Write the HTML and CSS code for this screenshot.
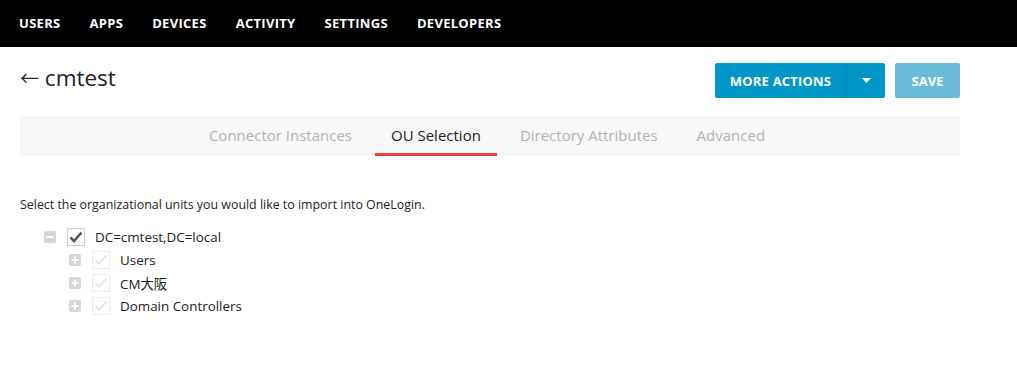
FILE: index.html
```html
<!DOCTYPE html>
<html>
<head>
<meta charset="utf-8">
<link rel="stylesheet" href="styles.css">
</head>
<body>
<nav class="topnav">
  <a>USERS</a><a>APPS</a><a>DEVICES</a><a>ACTIVITY</a><a>SETTINGS</a><a>DEVELOPERS</a>
</nav>
<main class="page">
  <div class="header">
    <h1 class="title"><span class="arrow">&larr;</span> cmtest</h1>
    <div class="actions">
      <div class="btn-split">
        <span class="btn-label">MORE ACTIONS</span>
        <span class="btn-caret"><svg width="9" height="5" viewBox="0 0 9 5"><path d="M0 0h9L4.5 5z" fill="#fff"/></svg></span>
      </div>
      <div class="btn-save">SAVE</div>
    </div>
  </div>
  <div class="tabs">
    <span class="tab">Connector Instances</span>
    <span class="tab active">OU Selection</span>
    <span class="tab">Directory Attributes</span>
    <span class="tab">Advanced</span>
  </div>
  <p class="intro">Select the organizational units you would like to import into OneLogin.</p>
  <ul class="tree">
    <li class="node">
      <div class="row">
        <span class="toggle"><svg width="12" height="12" viewBox="0 0 12 12"><rect width="12" height="12" rx="2" fill="#d6d6d6"/><rect x="2.5" y="5" width="7" height="2" fill="#fff"/></svg></span>
        <span class="cb on"><svg width="14" height="12" viewBox="0 0 14 12"><path d="M1.5 6.5l3.5 3.5 7.5-8.5" fill="none" stroke="#555" stroke-width="2.6"/></svg></span>
        <span class="label">DC=cmtest,DC=local</span>
      </div>
      <ul class="children">
        <li class="row">
          <span class="toggle"><svg width="12" height="12" viewBox="0 0 12 12"><rect width="12" height="12" rx="2" fill="#d6d6d6"/><rect x="2.5" y="5" width="7" height="2" fill="#fff"/><rect x="5" y="2.5" width="2" height="7" fill="#fff"/></svg></span>
          <span class="cb off"><svg width="14" height="12" viewBox="0 0 14 12"><path d="M1.5 6.5l3.5 3.5 7.5-8.5" fill="none" stroke="#e6e6e6" stroke-width="2"/></svg></span>
          <span class="label">Users</span>
        </li>
        <li class="row">
          <span class="toggle"><svg width="12" height="12" viewBox="0 0 12 12"><rect width="12" height="12" rx="2" fill="#d6d6d6"/><rect x="2.5" y="5" width="7" height="2" fill="#fff"/><rect x="5" y="2.5" width="2" height="7" fill="#fff"/></svg></span>
          <span class="cb off"><svg width="14" height="12" viewBox="0 0 14 12"><path d="M1.5 6.5l3.5 3.5 7.5-8.5" fill="none" stroke="#e6e6e6" stroke-width="2"/></svg></span>
          <span class="label">CM大阪</span>
        </li>
        <li class="row">
          <span class="toggle"><svg width="12" height="12" viewBox="0 0 12 12"><rect width="12" height="12" rx="2" fill="#d6d6d6"/><rect x="2.5" y="5" width="7" height="2" fill="#fff"/><rect x="5" y="2.5" width="2" height="7" fill="#fff"/></svg></span>
          <span class="cb off"><svg width="14" height="12" viewBox="0 0 14 12"><path d="M1.5 6.5l3.5 3.5 7.5-8.5" fill="none" stroke="#e6e6e6" stroke-width="2"/></svg></span>
          <span class="label">Domain Controllers</span>
        </li>
      </ul>
    </li>
  </ul>
</main>
</body>
</html>
```

FILE: styles.css
```css
* { box-sizing: border-box; }
body {
  margin: 0;
  font-family: "Open Sans", "Noto Sans CJK JP", sans-serif;
  color: #333;
  background: #fff;
}
.topnav {
  background: #000;
  height: 47px;
  display: flex;
  align-items: center;
  gap: 29px;
  padding: 0 19px 1px;
}
.topnav a {
  color: #fff;
  font-weight: 700;
  font-size: 13px;
  letter-spacing: 0.3px;
}
.page {
  padding: 0 57px 0 20px;
}
.header {
  display: flex;
  justify-content: space-between;
  align-items: flex-start;
  padding-top: 16px;
  height: 69px;
}
.title {
  margin: 0;
  font-size: 22.5px;
  font-weight: 400;
  color: #222;
  line-height: 30px;
}
.arrow { font-size: 19px; }
.actions {
  display: flex;
  gap: 10px;
}
.btn-split {
  display: flex;
  height: 35px;
  background: #0096c6;
  border-radius: 2px;
  color: #fff;
  font-weight: 700;
  font-size: 13px;
  letter-spacing: 0.2px;
}
.btn-label {
  width: 132px;
  display: flex;
  align-items: center;
  justify-content: center;
  border-right: 1px solid #0589b5;
}
.btn-caret {
  width: 38px;
  display: flex;
  align-items: center;
  justify-content: center;
}
.btn-save {
  height: 35px;
  width: 65px;
  background: #6abbd9;
  border-radius: 2px;
  color: #fff;
  font-weight: 700;
  font-size: 13px;
  display: flex;
  align-items: center;
  justify-content: center;
}
.tabs {
  background: #f7f7f7;
  height: 40px;
  display: flex;
  justify-content: center;
  gap: 7px;
  padding-right: 6px;
}
.tab {
  padding: 1px 16px 0;
  display: flex;
  align-items: center;
  font-size: 15px;
  color: #b3b3b3;
  border-bottom: 3px solid transparent;
}
.tab.active {
  color: #222;
  border-bottom-color: #e8423b;
}
.intro {
  margin: 40px 0 0;
  font-size: 12.4px;
  color: #222;
  line-height: 18px;
}
.tree, .children {
  list-style: none;
  margin: 0;
  padding: 0;
}
.tree { margin-top: 11px; padding-left: 24px; }
.children { padding-left: 25px; }
.row {
  display: flex;
  align-items: center;
  height: 23px;
}
.toggle {
  width: 12px;
  height: 12px;
  display: flex;
  margin-right: 11px;
}
.cb {
  width: 18px;
  height: 18px;
  border: 1px solid #d0d0d0;
  display: flex;
  align-items: center;
  justify-content: center;
  margin-right: 10px;
  background: #fff;
}
.cb.off { border-color: #ececec; }
.label {
  font-size: 13.4px;
  color: #222;
}
```
